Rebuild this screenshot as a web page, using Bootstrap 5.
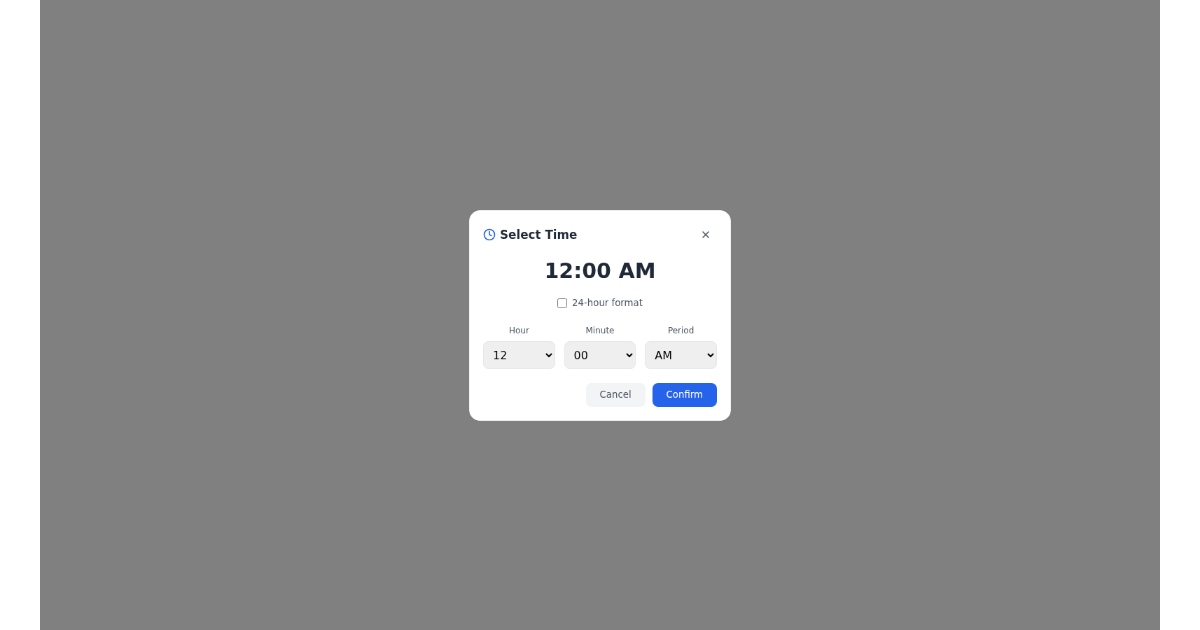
<!DOCTYPE html>
<html lang="en">
<head>
<meta charset="utf-8">
<title>Select Time</title>
<link href="https://cdn.jsdelivr.net/npm/bootstrap@5.3.0/dist/css/bootstrap.min.css" rel="stylesheet">
<style>
html,body{height:100%;margin:0;background:#fff;}
body{font-family:"DejaVu Sans",sans-serif;overflow:hidden;}
.stage{width:1120px;height:630px;margin:0 auto;background:#808080;}
.dialog{flex:none;width:374px;height:301px;background:#fff;border-radius:16px;padding:20px;color:#1f2937;transform:scale(.7);will-change:transform;}
.dlg-head{height:30px;margin-bottom:19px;}
.dlg-title{font-size:16.8px;font-weight:700;line-height:28px;margin:0;color:#1f2937;}
.dlg-gap{gap:6px;}
.dlg-x{width:32px;height:30px;border:0;background:transparent;padding:0;color:#4b5563;}
.dlg-time{font-size:30px;font-weight:700;line-height:36px;margin-bottom:18px;color:#1f2937;}
.dlg-check{font-size:13.3px;color:#4b5563;line-height:20px;gap:7px;margin-bottom:21px;}
.dlg-check input{width:14px;height:14px;margin:0;}
.dlg-lab{font-size:12px;color:#4b5563;line-height:16px;margin-bottom:7px;text-align:center;}
.dlg-sel{width:100%;height:40px;font-family:inherit;font-size:16px;color:#000;background:#efefef;border:1px solid #e5e7eb;border-radius:8px;padding:0 0 0 9px;}
.dlg-grid{gap:12.8px;margin-bottom:20px;}
.dlg-grid>div{flex:1 1 0;min-width:0;}
.dlg-btn{font-size:13.3px;height:34px;line-height:34px;padding:0 20px;border:0;border-radius:8px;}
.dlg-cancel{background:#f3f4f6;color:#4b5563;}
.dlg-ok{background:#2563eb;color:#fff;}
.dlg-acts{gap:10px;}
</style>
</head>
<body>
<div class="stage d-flex align-items-center justify-content-center">
  <div class="dialog">
    <div class="dlg-head d-flex align-items-center justify-content-between">
      <div class="d-flex align-items-center dlg-gap">
        <svg width="18" height="18" viewBox="0 0 24 24" fill="none" stroke="#2563eb" stroke-width="2.2" stroke-linecap="round" stroke-linejoin="round"><circle cx="12" cy="12" r="10"/><path d="M12 6v6l4 2"/></svg>
        <h2 class="dlg-title">Select Time</h2>
      </div>
      <button type="button" class="dlg-x d-flex align-items-center justify-content-center" aria-label="Close">
        <svg width="16" height="16" viewBox="0 0 24 24" fill="none" stroke="currentColor" stroke-width="2.4" stroke-linecap="round"><path d="M18 6 6 18M6 6l12 12"/></svg>
      </button>
    </div>
    <div class="dlg-time text-center">12:00 AM</div>
    <label class="dlg-check d-flex align-items-center justify-content-center">
      <input type="checkbox"><span>24-hour format</span>
    </label>
    <div class="dlg-grid d-flex">
      <div><div class="dlg-lab">Hour</div><select class="dlg-sel"><option>12</option></select></div>
      <div><div class="dlg-lab">Minute</div><select class="dlg-sel"><option>00</option></select></div>
      <div><div class="dlg-lab">Period</div><select class="dlg-sel"><option>AM</option></select></div>
    </div>
    <div class="dlg-acts d-flex justify-content-end">
      <button type="button" class="dlg-btn dlg-cancel">Cancel</button>
      <button type="button" class="dlg-btn dlg-ok">Confirm</button>
    </div>
  </div>
</div>
<script src="https://cdn.jsdelivr.net/npm/bootstrap@5.3.0/dist/js/bootstrap.bundle.min.js"></script>
</body>
</html>
